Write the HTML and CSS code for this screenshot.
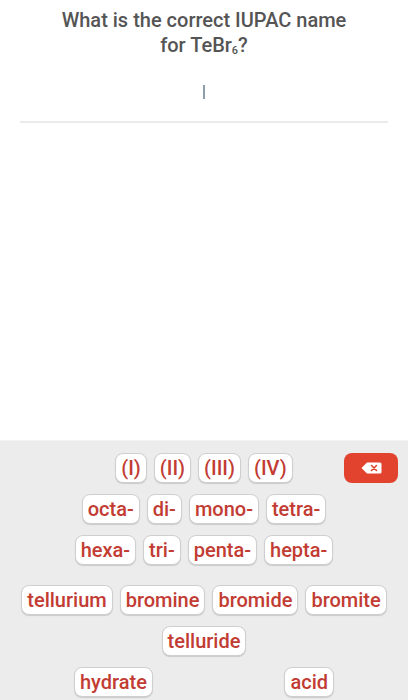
FILE: index.html
```html
<!DOCTYPE html>
<html lang="en">
<head>
  <meta charset="UTF-8">
  <title>IUPAC name</title>
  <link rel="stylesheet" href="styles.css">
</head>
<body>

  <div class="ust">
    <h1 class="soru">What is the correct IUPAC name<br>for TeBr<sub>6</sub>?</h1>
    <div class="cevap"><span class="imlec"></span></div>
  </div>

  <!-- klavye -->
  <div class="klavye">
    <div class="satir">
      <div class="tus">(I)</div>
      <div class="tus">(II)</div>
      <div class="tus">(III)</div>
      <div class="tus">(IV)</div>
      <div class="sil">
        <svg width="21" height="12" viewBox="0 0 21 12">
          <path d="M6 0.5 H19 Q20.5 0.5 20.5 2 V10 Q20.5 11.5 19 11.5 H6 L0.5 6 Z" fill="#fff"/>
          <path d="M10.5 3.5 L15.5 8.5 M15.5 3.5 L10.5 8.5" stroke="#e2432f" stroke-width="1.6" stroke-linecap="round"/>
        </svg>
      </div>
    </div>
    <div class="satir">
      <div class="tus">octa-</div>
      <div class="tus">di-</div>
      <div class="tus">mono-</div>
      <div class="tus">tetra-</div>
    </div>
    <div class="satir">
      <div class="tus">hexa-</div>
      <div class="tus">tri-</div>
      <div class="tus">penta-</div>
      <div class="tus">hepta-</div>
    </div>

    <div class="satir grup">
      <div class="tus">tellurium</div>
      <div class="tus">bromine</div>
      <div class="tus">bromide</div>
      <div class="tus">bromite</div>
    </div>
    <div class="satir">
      <div class="tus">telluride</div>
    </div>
    <div class="satir iki">
      <div class="tus">hydrate</div>
      <div class="tus">acid</div>
    </div>
  </div>

</body>
</html>
```

FILE: styles.css
```css
body {
  margin: 0;
  font-family: Roboto, "Liberation Sans", Arial, sans-serif;
  background-color: #fff;
}
.ust {
  height: 440px;
  background-color: #fff;
}
.soru {
  margin: 0;
  padding-top: 8px;
  font-size: 20px;
  line-height: 25px;
  font-weight: 500;
  color: #555;
  text-align: center;
}
.soru sub {
  font-size: 11px;
  vertical-align: baseline;
  position: relative;
  top: 2px;
}
.cevap {
  margin: 0 20px;
  height: 60px;
  border-bottom: 2px solid #ebebeb;
  display: flex;
  justify-content: center;
  align-items: flex-start;
}
.imlec {
  display: block;
  width: 2px;
  height: 14px;
  margin-top: 24px;
  background-color: #8d9eaa;
}
.klavye {
  background-color: #ececec;
  border-top: 1px solid #f3f3f3;
  padding-top: 12px;
  height: 247px;
}
.satir {
  position: relative;
  display: flex;
  justify-content: center;
  gap: 7px;
  margin-bottom: 11px;
}
.satir.grup {
  margin-top: 20px;
}
.satir.iki {
  justify-content: space-between;
  padding: 0 74px;
}
.tus {
  height: 28px;
  line-height: 28px;
  padding: 0 5px;
  background-color: #fff;
  border: 1px solid #cfcfcf;
  border-radius: 8px;
  box-shadow: 0 1px 1px rgba(0,0,0,0.14);
  color: #c23c33;
  font-size: 20px;
  font-weight: 500;
  cursor: pointer;
}
.sil {
  position: absolute;
  right: 10px;
  top: 0;
  width: 54px;
  height: 30px;
  background-color: #e2432f;
  border-radius: 8px;
  display: flex;
  align-items: center;
  justify-content: center;
  cursor: pointer;
}
```
